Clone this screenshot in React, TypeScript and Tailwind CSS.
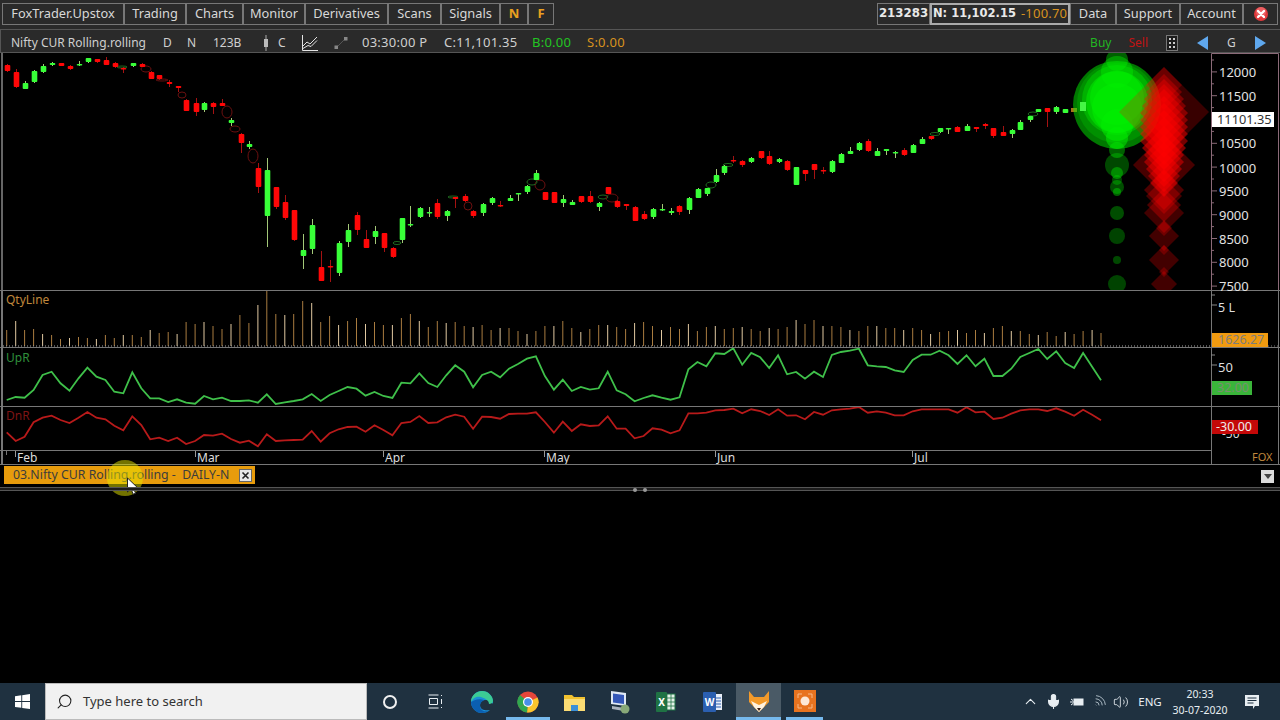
import { ChevronUp, Mic, Search, Volume2, Wifi } from "lucide-react";

// x, body top, body bottom, wick top, wick bottom, colour
type Candle = [number, number, number, number, number, "r" | "g"];

const candles: Candle[] = [
  [7, 65, 71, 64, 72, "r"], [16, 72, 87, 69, 88, "r"], [25, 83, 89, 81, 89, "g"], [34, 71, 82, 70, 83, "g"],
  [43, 66, 72, 64, 73, "g"], [52, 63, 65, 62, 66, "g"], [61, 63, 66, 63, 66, "r"], [70, 66, 69, 65, 70, "r"],
  [79, 64, 65, 61, 66, "g"], [88, 58, 62, 58, 63, "g"], [97, 59, 62, 59, 63, "r"], [106, 60, 65, 57, 65, "r"],
  [115, 63, 67, 62, 68, "r"], [123, 68, 69, 67, 73, "r"], [133, 63, 66, 63, 67, "g"], [142, 64, 67, 63, 67, "r"],
  [151, 72, 79, 71, 79, "r"], [159, 75, 79, 75, 80, "r"], [169, 82, 84, 80, 87, "r"], [178, 86, 88, 86, 92, "r"],
  [186, 100, 111, 99, 111, "r"], [196, 103, 112, 98, 116, "r"], [204, 103, 110, 102, 112, "g"], [213, 103, 107, 102, 114, "r"],
  [222, 103, 106, 99, 106, "r"], [231, 120, 123, 118, 126, "g"], [241, 134, 143, 133, 153, "r"], [249, 144, 147, 141, 149, "g"],
  [258, 168, 187, 163, 193, "r"], [267, 170, 216, 158, 247, "g"], [276, 187, 207, 187, 209, "r"], [285, 202, 218, 195, 220, "r"],
  [294, 210, 240, 210, 241, "r"], [303, 250, 256, 234, 269, "g"], [312, 225, 249, 219, 254, "g"], [321, 267, 281, 251, 281, "r"],
  [330, 266, 267, 260, 282, "r"], [339, 243, 273, 241, 276, "g"], [348, 230, 242, 224, 247, "g"], [357, 215, 230, 212, 235, "r"],
  [366, 239, 248, 230, 248, "r"], [375, 231, 237, 226, 244, "g"], [384, 233, 248, 233, 252, "r"], [393, 248, 257, 247, 258, "r"],
  [402, 218, 240, 218, 243, "g"], [410, 224, 225, 206, 227, "g"], [420, 208, 217, 207, 218, "g"], [429, 212, 213, 207, 217, "g"],
  [437, 203, 217, 199, 219, "r"], [447, 211, 216, 210, 221, "g"], [455, 197, 199, 197, 208, "r"], [465, 196, 201, 194, 202, "r"],
  [473, 211, 216, 210, 218, "r"], [483, 204, 213, 203, 216, "g"], [492, 198, 203, 197, 205, "g"], [500, 205, 206, 201, 207, "r"],
  [510, 198, 201, 195, 201, "g"], [518, 193, 194, 193, 201, "g"], [527, 186, 192, 185, 194, "g"], [536, 173, 180, 170, 180, "g"],
  [545, 192, 200, 192, 200, "r"], [554, 192, 203, 192, 203, "r"], [563, 199, 203, 195, 207, "g"], [572, 202, 205, 200, 205, "g"],
  [581, 196, 202, 196, 203, "r"], [590, 196, 202, 191, 203, "r"], [599, 203, 207, 202, 211, "g"], [608, 187, 194, 187, 194, "r"],
  [617, 201, 207, 200, 208, "r"], [626, 204, 206, 204, 210, "r"], [635, 207, 221, 206, 221, "r"], [644, 214, 219, 211, 220, "r"],
  [653, 209, 217, 208, 219, "g"], [662, 209, 210, 204, 211, "g"], [671, 211, 213, 208, 215, "g"], [679, 206, 212, 205, 215, "r"],
  [689, 198, 210, 197, 214, "g"], [698, 189, 198, 188, 198, "g"], [707, 188, 194, 188, 196, "g"], [716, 175, 182, 169, 183, "g"],
  [724, 166, 173, 165, 175, "g"], [733, 160, 161, 156, 163, "r"], [742, 161, 165, 160, 167, "r"], [751, 158, 162, 157, 163, "g"],
  [761, 151, 158, 151, 159, "r"], [769, 156, 164, 151, 165, "r"], [779, 159, 162, 158, 163, "g"], [787, 161, 170, 160, 171, "r"],
  [796, 167, 185, 167, 185, "g"], [805, 170, 174, 170, 181, "r"], [814, 164, 170, 164, 179, "r"], [823, 170, 171, 167, 174, "r"],
  [832, 161, 172, 160, 173, "g"], [841, 154, 163, 153, 163, "g"], [850, 151, 154, 147, 154, "g"], [859, 143, 150, 142, 151, "g"],
  [868, 141, 151, 139, 152, "r"], [877, 151, 156, 148, 156, "g"], [886, 149, 151, 149, 155, "g"], [895, 152, 153, 151, 158, "g"],
  [904, 150, 155, 148, 156, "r"], [913, 145, 153, 144, 153, "g"], [922, 139, 144, 137, 144, "g"], [931, 136, 139, 136, 140, "r"],
  [940, 128, 132, 128, 133, "g"], [948, 128, 129, 128, 134, "g"], [957, 127, 132, 126, 132, "r"], [967, 126, 131, 124, 131, "g"],
  [976, 127, 129, 127, 132, "r"], [985, 124, 126, 123, 129, "r"], [993, 128, 136, 128, 138, "r"], [1003, 132, 136, 126, 136, "r"],
  [1012, 130, 134, 129, 138, "g"], [1020, 122, 130, 120, 130, "g"], [1030, 116, 120, 116, 122, "g"], [1038, 109, 112, 109, 112, "g"],
  [1047, 108, 112, 108, 127, "r"], [1056, 107, 112, 106, 114, "g"], [1065, 109, 113, 109, 113, "g"],
];

const rings: [number, number, number, number, string][] = [
  [146, 69, 5, 3, "#6b1010"], [182, 95, 4, 3, "#6b1010"], [227, 112, 5, 6, "#6b1010"], [235, 129, 5, 3, "#6b1010"],
  [253, 156, 5, 7, "#6b1010"], [397, 243, 4, 1.5, "#1f6a1f"], [468, 206, 4, 4, "#6b1010"], [540, 185, 5, 5, "#6b1010"],
  [532, 182, 5, 3, "#1f6a1f"], [603, 197, 5, 2, "#1f6a1f"], [612, 198, 6, 4, "#6b1010"], [711, 185, 5, 3, "#1f6a1f"],
  [728, 165, 5, 1.5, "#1f6a1f"], [935, 134, 5, 1.5, "#1f6a1f"], [1033, 114, 5, 2, "#1f6a1f"], [122, 67, 5, 1, "#1f6a1f"],
  [162, 80, 6, 1, "#6b1010"], [453, 197, 5, 1, "#1f6a1f"],
];

const greenBubbles: [number, number, number][] = [
  [105, 44, 0.5], [103, 40, 0.2], [100, 35, 0.35], [102, 31, 0.5], [98, 27, 0.5], [108, 25, 0.5], [125, 16, 0.5], [138, 11, 0.5],
  [72, 16, 0.4], [60, 11, 0.4], [150, 8, 0.4], [165, 12, 0.3], [173, 6, 0.4], [180, 5, 0.3], [187, 7, 0.32],
  [192, 4, 0.4], [213, 7, 0.32], [236, 8, 0.28], [260, 4, 0.3], [284, 9, 0.28],
];

const redBubbles: [number, number, number][] = [
  [112, 45, 0.22], [85, 18, 0.25], [92, 18, 0.3], [99, 20, 0.35], [106, 22, 0.35], [113, 24, 0.4], [120, 24, 0.4], [127, 24, 0.45],
  [134, 24, 0.45], [141, 24, 0.45], [148, 22, 0.5], [165, 31, 0.28], [155, 20, 0.45], [162, 20, 0.45], [169, 18, 0.45], [176, 16, 0.4],
  [183, 14, 0.4], [190, 20, 0.3], [196, 18, 0.28], [205, 17, 0.3], [213, 20, 0.26], [228, 8, 0.25], [236, 15, 0.26], [250, 5, 0.25],
  [260, 15, 0.26], [272, 5, 0.25], [284, 13, 0.26],
];

const qty = [
  16, 25, 16, 17, 12, 11, 7, 8, 9, 8, 7, 11, 8, 11, 11, 9, 16, 13, 14, 12, 24, 22, 24, 20, 17, 22, 31, 23, 41, 56, 32, 31, 32, 45, 43,
  24, 30, 21, 25, 28, 22, 24, 21, 21, 28, 32, 25, 19, 25, 23, 24, 20, 19, 21, 16, 18, 18, 15, 12, 15, 20, 20, 25, 18, 14, 17, 21, 21,
  19, 17, 23, 24, 20, 16, 19, 17, 22, 15, 19, 20, 17, 18, 19, 17, 15, 18, 17, 19, 26, 22, 26, 20, 20, 19, 16, 15, 20, 20, 18, 18, 16,
  18, 16, 12, 14, 15, 16, 13, 16, 13, 18, 20, 15, 15, 12, 11, 14, 10, 14, 12, 15, 16, 13,
];

// read off the zoomed crops (3x), so they get divided back down
const fromZoom = (base: number, zs: number[]) => zs.map((z) => base + z / 3);

const upR = [
  ...fromZoom(285, [345, 336, 338, 315, 270, 260, 295, 317, 280, 248, 275, 285, 320, 325, 262, 310, 340, 340, 351, 343, 353, 356, 333, 343, 338, 348, 348, 346, 353, 328, 357, 352, 348, 343]),
  ...fromZoom(290, [312, 333, 315, 303, 291, 296, 317, 306, 318, 324, 278, 280, 250, 279, 291, 256, 226, 245, 292, 255, 245, 262, 236, 222, 206, 199, 258, 299, 269, 303, 291, 299, 295, 245, 301, 313, 334, 324, 316, 323, 329, 322, 238, 216, 229]),
  ...fromZoom(290, [190, 192, 175, 224, 189, 202, 234, 196, 253, 246, 266, 245, 261, 195, 186, 182, 176, 226, 229, 231, 241, 246, 210, 194, 194, 182, 196, 222, 196, 229, 206, 258, 258, 236, 201, 189, 177, 207, 184, 219, 234, 189, 230, 271]),
];

const dnR = [
  ...fromZoom(285, [442, 468, 455, 412, 398, 392, 405, 414, 398, 381, 398, 403, 422, 436, 394, 420, 463, 458, 468, 458, 477, 468, 450, 452, 446, 462, 473, 467, 484, 448, 468, 466, 465, 464, 438]),
  ...fromZoom(290, [455, 430, 418, 411, 410, 425, 406, 420, 436, 399, 396, 378, 399, 397, 382, 374, 380, 416, 380, 381, 386, 372, 371, 371, 367, 396, 428, 395, 423, 403, 408, 406, 379, 416, 416, 445, 438, 415, 419, 430, 421, 370, 370, 368]),
  ...fromZoom(290, [361, 360, 356, 370, 358, 363, 375, 358, 377, 376, 388, 366, 374, 361, 358, 356, 351, 368, 364, 368, 376, 376, 364, 358, 358, 358, 358, 368, 352, 367, 365, 387, 383, 371, 361, 358, 358, 363, 355, 365, 377, 359, 374, 391]),
];

const xAt = (i: number) => 6.7 + 8.97 * i;
const linePoints = (ys: number[]) => ys.map((y, i) => `${xAt(i).toFixed(1)},${y.toFixed(1)}`).join(" ");

const priceLabels: [string, number][] = [
  ["12000", 72], ["11500", 96], ["10500", 143], ["10000", 168], ["9500", 191], ["9000", 215], ["8500", 239], ["8000", 262], ["7500", 286],
];

const months: [string, number][] = [["Feb", 15], ["Mar", 195], ["Apr", 383], ["May", 544], ["Jun", 715], ["Jul", 912]];

const leftMenu = [
  { label: "FoxTrader.Upstox", w: "w-[122px]" },
  { label: "Trading", w: "w-[62px]" },
  { label: "Charts", w: "w-[57px]" },
  { label: "Monitor", w: "w-[62px]" },
  { label: "Derivatives", w: "w-[83px]" },
  { label: "Scans", w: "w-[53px]" },
  { label: "Signals", w: "w-[59px]" },
];

function MenuButton({ label, className }: { label: string; className: string }) {
  return (
    <div className={`flex h-[22px] items-center justify-center border border-[#777] text-[12.8px] text-[#d8d8d8] ${className}`}>
      {label}
    </div>
  );
}

function TopBar() {
  return (
    <div className="flex h-[29px] items-start justify-between bg-[#2a2a2a] pt-[3px] pl-[2px] pr-[2px]">
      <div className="flex">
        {leftMenu.map((m) => (
          <MenuButton key={m.label} label={m.label} className={m.w} />
        ))}
        <div className="flex h-[22px] w-[28px] items-center justify-center border border-[#777] text-[13px] font-bold text-[#e8a020]">N</div>
        <div className="flex h-[22px] w-[26px] items-center justify-center border border-[#777] text-[13px] font-bold text-[#e8a020]">F</div>
      </div>
      <div className="flex items-start">
        <div className="flex h-[22px] w-[53px] items-center justify-center border border-[#777] font-['DejaVu_Sans',sans-serif] text-[11.8px] font-bold text-[#e8e8e8]">
          213283
        </div>
        <div className="flex h-[22px] w-[140px] items-center whitespace-nowrap border-2 border-[#aaa] pl-[1px] font-['DejaVu_Sans',sans-serif] text-[11.5px] font-bold text-[#e8e8e8]">
          N: 11,102.15
          <span className="ml-[5px] font-['Noto_Sans',sans-serif] text-[13px] font-normal tracking-[0.2px] text-[#d8921e]">-100.70</span>
        </div>
        <MenuButton label="Data" className="w-[46px]" />
        <MenuButton label="Support" className="w-[64px]" />
        <MenuButton label="Account" className="w-[63px]" />
        <div className="flex h-[22px] w-[35px] items-center justify-center border border-[#777]">
          <svg width="16" height="16" viewBox="0 0 16 16">
            <circle cx="8" cy="8" r="7" fill="#e0393c" />
            <circle cx="8" cy="6" r="5" fill="#f0797b" opacity="0.6" />
            <path d="M5 5l6 6M11 5l-6 6" stroke="#fff" strokeWidth="2.4" strokeLinecap="round" />
          </svg>
        </div>
      </div>
    </div>
  );
}

function InfoBar() {
  return (
    <div className="flex h-[24px] items-center justify-between border border-r-0 border-[#555] bg-[#2a2a2a] pl-[10px] pr-[14px] pt-[3px] text-[12px] text-[#cfcfcf]">
      <div className="flex items-center whitespace-nowrap">
        <span className="w-[136px]">Nifty CUR Rolling.rolling</span>
        <span className="ml-[16px] w-[24px]">D</span>
        <span className="w-[26px]">N</span>
        <span className="w-[36px]">123B</span>
        <svg className="ml-[14px]" width="6" height="16" viewBox="0 0 6 16">
          <path d="M3 0v16" stroke="#aaa" />
          <rect x="1" y="4" width="4" height="8" fill="#bbb" />
        </svg>
        <span className="ml-[9px] w-[8px]">C</span>
        <svg className="ml-[15px]" width="18" height="18" viewBox="0 0 18 18" fill="none" stroke="#e4e4e4">
          <path d="M1.5 1v15.5H17" />
          <path d="M2 12l4-4 3 2 7-7M2 14.5l5-3 3 1 6-6" strokeWidth="1" />
        </svg>
        <svg className="ml-[15px]" width="14" height="14" viewBox="0 0 14 14">
          <path d="M3 11l8-8" stroke="#555" />
          <rect x="0.5" y="9.5" width="3.5" height="3.5" fill="#888" />
          <rect x="10" y="1" width="3.5" height="3.5" fill="#888" />
        </svg>
        <span className="ml-[14px] w-[65px] text-[13px] tracking-[0.25px]">03:30:00 P</span>
        <span className="ml-[17px] w-[72px] text-[13px] tracking-[0.25px]">C:11,101.35</span>
        <span className="ml-[16px] w-[38px] text-[13px] tracking-[0.25px] text-[#22c522]">B:0.00</span>
        <span className="ml-[17px] text-[13px] tracking-[0.25px] text-[#d8921e]">S:0.00</span>
      </div>
      <div className="flex items-center">
        <span className="text-[#22b822]">Buy</span>
        <span className="ml-[17px] text-[#c01414]">Sell</span>
        <svg className="ml-[18px]" width="12" height="16" viewBox="0 0 12 16">
          <rect x="0.5" y="0.5" width="11" height="15" fill="#1c1c1c" stroke="#777" />
          <path d="M3 3h2v2H3zM7 3h2v2H7zM3 7h2v2H3zM7 7h2v2H7zM3 11h2v2H3zM7 11h2v2H7z" fill="#ccc" />
        </svg>
        <svg className="ml-[19px]" width="11" height="14" viewBox="0 0 11 14">
          <path d="M11 0v14L0 7z" fill="#5fa8ee" />
        </svg>
        <span className="ml-[19px] w-[18px]">G</span>
        <svg className="ml-[10px]" width="11" height="14" viewBox="0 0 11 14">
          <path d="M0 0v14l11-7z" fill="#5fa8ee" />
        </svg>
      </div>
    </div>
  );
}

function PricePanel() {
  const ticks = Array.from({ length: 20 }, (_, i) => 60 + i * 11.9);
  return (
    <svg className="block" width="1280" height="238" viewBox="0 53 1280 238">
      <defs>
        <clipPath id="plot">
          <rect x="3" y="53" width="1208" height="237" />
        </clipPath>
        <filter id="soft">
          <feGaussianBlur stdDeviation="0.7" />
        </filter>
      </defs>
      <g clipPath="url(#plot)">
        {rings.map(([cx, cy, rx, ry, color], i) => (
          <ellipse key={i} cx={cx} cy={cy} rx={rx} ry={ry} fill="none" stroke={color} />
        ))}
        {candles.map(([x, top, bottom, wickTop, wickBottom, side]) => (
          <g key={x}>
            <path d={`M${x + 0.5} ${wickTop}V${wickBottom}`} stroke={side === "r" ? "#a51212" : "#a3c878"} />
            <rect x={x - 2.3} y={top} width="5.6" height={Math.max(bottom - top, 1.5)} rx="1" fill={side === "r" ? "#ff0707" : "#38ff38"} />
          </g>
        ))}
        <rect x="1071" y="108" width="6" height="4" fill="#a9701a" />
        <g filter="url(#soft)">
          {greenBubbles.map(([cy, r, o], i) => (
            <circle key={i} cx="1117" cy={cy} r={r} fill="#00f000" fillOpacity={o} />
          ))}
        </g>
        <rect x="1080" y="102" width="6" height="9" fill="#45f545" />
        <g filter="url(#soft)">
          {redBubbles.map(([cy, r, o], i) => (
            <path key={i} d={`M1164 ${cy - r}L${1164 + r} ${cy}L1164 ${cy + r}L${1164 - r} ${cy}Z`} fill="#ff0000" fillOpacity={o} />
          ))}
        </g>
      </g>
      <path d="M1211.5 53.5H1278.5V291M1211.5 53.5V291" fill="none" stroke="#8b6a78" />
      <path d="M2 53V291" stroke="#666" strokeWidth="2" />
      <path d="M0 290.5H1280" stroke="#777" />
      {ticks.map((y, i) => (
        <path key={y} d={`M1211 ${y}H${i % 2 === 1 ? 1217 : 1214}`} stroke="#8b6a78" />
      ))}
      {priceLabels.map(([label, y]) => (
        <text key={label} x="1219" y={y + 4.5} fontSize="13" fill="#e2e2e2">
          {label}
        </text>
      ))}
      <rect x="1212" y="112" width="62" height="15" fill="#fff" />
      <text x="1217" y="124" fontSize="12.8" fill="#333">
        11101.35
      </text>
    </svg>
  );
}

function QtyPanel() {
  return (
    <svg className="block" width="1280" height="57" viewBox="0 291 1280 57">
      <path d="M2 291V348" stroke="#777" strokeWidth="2" />
      <path d="M1211.5 291V348M1278.5 291V348" stroke="#777" />
      <text x="6" y="304" fontSize="12" fill="#c0883c">
        QtyLine
      </text>
      {qty.map((h, i) => (
        <path key={i} d={`M${xAt(i).toFixed(1)} 346V${346 - h}`} stroke={i % 3 === 1 ? "#e0c8a0" : "#a97c40"} />
      ))}
      <path d="M3 346H1211" stroke="#aaa" strokeDasharray="1 2" />
      <path d="M1211 346H1280" stroke="#777" strokeDasharray="1 2" />
      <path d="M1211 295H1215M1211 305H1217" stroke="#888" />
      <text x="1218" y="312" fontSize="12.5" fill="#ddd">
        5 L
      </text>
      <rect x="1212" y="333" width="56" height="14" fill="#f09a10" />
      <text x="1218" y="344" fontSize="12.5" fill="#7d7d7d">
        1626.27
      </text>
      <path d="M0 347.5H1280" stroke="#777" />
    </svg>
  );
}

function UpPanel() {
  return (
    <svg className="block" width="1280" height="59" viewBox="0 348 1280 59">
      <path d="M2 348V407" stroke="#777" strokeWidth="2" />
      <path d="M1211.5 348V407M1278.5 348V407" stroke="#777" />
      <text x="6" y="362" fontSize="12" fill="#2f8f3c">
        UpR
      </text>
      <polyline points={linePoints(upR)} fill="none" stroke="#3fc04a" strokeWidth="1.8" />
      <path d="M1211 355H1215M1211 365H1217" stroke="#888" />
      <text x="1218" y="372" fontSize="13" fill="#ddd">
        50
      </text>
      <rect x="1212" y="381" width="40" height="14" fill="#3ab53a" />
      <text x="1217" y="392" fontSize="12.5" fill="#78906f">
        32.00
      </text>
      <path d="M0 406.5H1280" stroke="#777" />
    </svg>
  );
}

function DownPanel() {
  return (
    <svg className="block" width="1280" height="44" viewBox="0 407 1280 44">
      <path d="M2 407V451" stroke="#777" strokeWidth="2" />
      <path d="M1211.5 407V451M1278.5 407V451" stroke="#777" />
      <text x="6" y="420" fontSize="12" fill="#7d1414">
        DnR
      </text>
      <polyline points={linePoints(dnR)} fill="none" stroke="#b81a1a" strokeWidth="1.8" />
      <text x="1222" y="438" fontSize="12" fill="#ddd">
        -50
      </text>
      <rect x="1212" y="420" width="46" height="14" fill="#c40808" />
      <text x="1216" y="431" fontSize="12.5" fill="#eee">
        -30.00
      </text>
      <path d="M0 450.5H1211.5" stroke="#777" />
    </svg>
  );
}

function DatePanel() {
  return (
    <svg className="block overflow-visible" width="1280" height="15" viewBox="0 451 1280 15">
      <path d="M1211.5 451V465M1278.5 451V465M6.5 451V455" stroke="#777" />
      <path d="M2 451V465" stroke="#777" strokeWidth="2" />
      {months.map(([label, x]) => (
        <g key={label}>
          <path d={`M${x + 0.5} 451V457`} stroke="#999" />
          <text x={x + 2} y="462" fontSize="12" fill="#ddd">
            {label}
          </text>
        </g>
      ))}
      <text x="1252" y="460.5" fontSize="11" fill="#c0883c">
        FOX
      </text>
      <path d="M0 464.5H1280" stroke="#777" />
    </svg>
  );
}

function TabStrip() {
  return (
    <div className="relative flex h-[21px] items-start justify-between bg-black pl-[4px] pr-[6px]">
      <div className="flex h-[18px] w-[251px] items-center justify-between bg-[#e89c0c] pl-[9px] pr-[3px] text-[12.3px] text-[#3c3c3c]">
        <span className="whitespace-pre">03.Nifty CUR Rolling.rolling -  DAILY-N</span>
        <div className="flex h-[13px] w-[13px] items-center justify-center border border-[#666] bg-[#e8e8e8]">
          <svg width="9" height="9" viewBox="0 0 9 9">
            <path d="M1.5 1.5l6 6M7.5 1.5l-6 6" stroke="#222" strokeWidth="1.6" />
          </svg>
        </div>
      </div>
      <div className="mt-[4px] flex h-[13px] w-[13px] items-center justify-center bg-[#dcdcdc]">
        <svg width="8" height="5" viewBox="0 0 8 5">
          <path d="M0 0h8L4 5z" fill="#444" />
        </svg>
      </div>
      <div className="absolute left-[107px] top-[-6px] h-[36px] w-[36px] rounded-full bg-[#e6e600]/50" />
      <svg className="absolute left-[126px] top-[11px]" width="14" height="19" viewBox="0 0 14 19">
        <path d="M1.5 1v14l3.4-3.2 2.3 5.4 2.4-1-2.3-5.2h4.6z" fill="#fff" stroke="#222" strokeWidth="1" />
      </svg>
    </div>
  );
}

function Splitter() {
  return (
    <div className="relative h-[4px] border-y border-[#555] bg-[#1c1c1c]">
      <div className="absolute left-[633px] top-0 h-[2px] w-[14px] border-x-4 border-dotted border-[#999]" />
    </div>
  );
}

function Taskbar() {
  return (
    <div className="flex h-[37px] items-stretch bg-[#1f3140] font-['Noto_Sans',sans-serif] text-[#e8eef2]">
      <div className="flex w-[45px] items-center justify-center">
        <svg width="15" height="15" viewBox="0 0 15 15" fill="#fff">
          <path d="M0 2.2l6.3-.9v5.8H0zM7.2 1.2L15 0v7.1H7.2zM0 8h6.3v5.8L0 12.9zM7.2 8H15v7l-7.8-1.1z" />
        </svg>
      </div>
      <div className="flex w-[322px] items-center border border-[#bbb] bg-[#f1f1f1] pl-[10px] text-[13px] text-[#333]">
        <Search size={17} strokeWidth={1.5} className="-scale-x-100 text-[#222]" />
        <span className="ml-[10px]">Type here to search</span>
      </div>
      <div className="flex w-[46px] items-center justify-center">
        <div className="h-[14px] w-[14px] rounded-full border-2 border-[#f0f0f0]" />
      </div>
      <div className="flex w-[44px] items-center justify-center">
        <svg width="17" height="15" viewBox="0 0 17 15" fill="none" stroke="#e8eef2">
          <path d="M1.5 1h10M1.5 14h10M2.5 4.5h8v6h-8zM14.5 1v1M14.5 5v5M14.5 13v1" />
        </svg>
      </div>
      <div className="flex w-[49px] items-center justify-center">
        <svg width="24" height="24" viewBox="0 0 24 24">
          <path d="M12 1a11 11 0 0 0-11 11c0 6 5 11 11 11 3 0 6-1 8-3-4 1-10 0-10-5 0-3 3-5 6-5s6 2 7 4V12A11 11 0 0 0 12 1z" fill="#1b8fd6" />
          <path d="M12 1C6 1 1 6 1 12c2-5 7-6 10-5s8 3 8 7c2 0 4-1 4-3C23 6 18 1 12 1z" fill="#3ccb94" />
          <path d="M1 12c0 6 5 11 11 11 3 0 5-1 6-2-4 1-8-1-8-5 0-3 2-5 4-6-6-2-11 1-13 2z" fill="#0b5fb0" />
        </svg>
      </div>
      <div className="flex w-[44px] items-center justify-center border-b-[3px] border-[#76b9ed] pt-[3px]">
        <svg width="22" height="22" viewBox="0 0 22 22">
          <circle cx="11" cy="11" r="10.5" fill="#e5463a" />
          <path d="M11 11L1.8 16.3A10.5 10.5 0 0 1 3 4z" fill="#2fa84f" />
          <path d="M11 11l9.5-4.5A10.5 10.5 0 0 1 10 21.5z" fill="#f9c52d" />
          <path d="M11 11L10 21.5A10.5 10.5 0 0 1 1.8 16.3z" fill="#2fa84f" />
          <circle cx="11" cy="11" r="5" fill="#fff" />
          <circle cx="11" cy="11" r="3.8" fill="#4a8fe8" />
        </svg>
      </div>
      <div className="flex w-[48px] items-center justify-center">
        <svg width="21" height="18" viewBox="0 0 21 18">
          <path d="M0 2h8l2 2h11v14H0z" fill="#f2c230" />
          <rect y="6" width="21" height="12" fill="#fbdc74" />
          <rect x="7" y="12" width="7" height="6" fill="#3b8fd8" />
        </svg>
      </div>
      <div className="flex w-[44px] items-center justify-center">
        <svg width="20" height="24" viewBox="0 0 20 24">
          <path d="M1 1l15 2v13L1 14z" fill="#dfe8f4" />
          <path d="M3 3.5l11 1.5v9L3 12.5z" fill="#3457b8" />
          <path d="M2 16l12 2v3L2 19z" fill="#aab3bf" />
          <circle cx="15" cy="19" r="4.5" fill="#88a878" />
        </svg>
      </div>
      <div className="flex w-[48px] items-center justify-center">
        <svg width="20" height="22" viewBox="0 0 20 22">
          <rect x="7" y="3" width="12" height="16" fill="#e4f0e8" stroke="#1f7244" />
          <path d="M11 3v16M15 3v16M7 7h12M7 11h12M7 15h12" stroke="#1f7244" strokeWidth="0.8" />
          <rect x="0" y="1" width="11" height="20" rx="1" fill="#1f7244" />
          <text x="5.5" y="15" textAnchor="middle" fontSize="10" fontWeight="700" fill="#fff">X</text>
        </svg>
      </div>
      <div className="flex w-[46px] items-center justify-center">
        <svg width="20" height="22" viewBox="0 0 20 22">
          <rect x="8" y="3" width="11" height="16" fill="#e8eef8" />
          <path d="M10 7h8M10 10h8M10 13h8M10 16h8" stroke="#2b5fb0" />
          <rect x="0" y="1" width="13" height="20" rx="1" fill="#2b5fb0" />
          <text x="6.5" y="15" textAnchor="middle" fontSize="10" fontWeight="700" fill="#fff">W</text>
        </svg>
      </div>
      <div className="flex w-[45px] items-center justify-center border-b-[3px] border-[#76b9ed] bg-[#4a5a66] pt-[2px]">
        <svg width="22" height="22" viewBox="0 0 22 22">
          <path d="M1 1l5 6h10l5-6v11l-10 10L1 12z" fill="#f39a2a" />
          <path d="M3 11l8 4 8-4-3 6-5 5-5-5z" fill="#fff3e0" />
          <path d="M9 18h4l-2 3z" fill="#402010" />
        </svg>
      </div>
      <div className="ml-[5px] flex w-[37px] items-center justify-center border-b-[3px] border-[#76b9ed] pt-[2px]">
        <svg width="22" height="22" viewBox="0 0 22 22">
          <rect width="22" height="22" fill="#e8731f" />
          <circle cx="11" cy="11" r="4.5" fill="#fde8d6" />
          <path d="M4 8V4h4M18 8V4h-4M4 14v4h4M18 14v4h-4" fill="none" stroke="#f6b98a" />
        </svg>
      </div>
      <div className="ml-[196px] flex w-[23px] items-center justify-center">
        <ChevronUp size={17} strokeWidth={1.5} />
      </div>
      <div className="flex w-[23px] items-center justify-center">
        <Mic size={17} fill="#e8eef2" strokeWidth={1.5} />
      </div>
      <div className="flex w-[23px] items-center justify-center">
        <svg width="15" height="12" viewBox="0 0 15 12" fill="none" stroke="#e8eef2">
          <rect x="5" y="3" width="9" height="6" fill="#e8eef2" />
          <path d="M5 6H1M2 3l2 1.5M2 9l2-1.5" />
        </svg>
      </div>
      <div className="flex w-[23px] items-center justify-center">
        <Wifi size={15} strokeWidth={1.5} className="rotate-45 text-[#aab8c2]" />
      </div>
      <div className="flex w-[20px] items-center justify-center">
        <Volume2 size={16} strokeWidth={1.3} />
      </div>
      <div className="flex w-[38px] items-center justify-center text-[11.5px]">ENG</div>
      <div className="flex w-[62px] flex-col items-center justify-center text-[10.5px] leading-[16px]">
        <span>20:33</span>
        <span>30-07-2020</span>
      </div>
      <div className="ml-[4px] flex w-[33px] items-center justify-center">
        <svg width="16" height="16" viewBox="0 0 16 16" fill="#e8eef2">
          <path d="M1 1h14v11h-4l-2 3v-3H1z" />
          <path d="M3.5 4h9M3.5 6.5h9M3.5 9h6" stroke="#1f3140" />
        </svg>
      </div>
    </div>
  );
}

export default function App() {
  return (
    <div className="flex h-[720px] w-[1280px] flex-col overflow-hidden bg-black font-['Noto_Sans',sans-serif]">
      <TopBar />
      <InfoBar />
      <PricePanel />
      <QtyPanel />
      <UpPanel />
      <DownPanel />
      <DatePanel />
      <TabStrip />
      <Splitter />
      <div className="flex-1 bg-black" />
      <Taskbar />
    </div>
  );
}
